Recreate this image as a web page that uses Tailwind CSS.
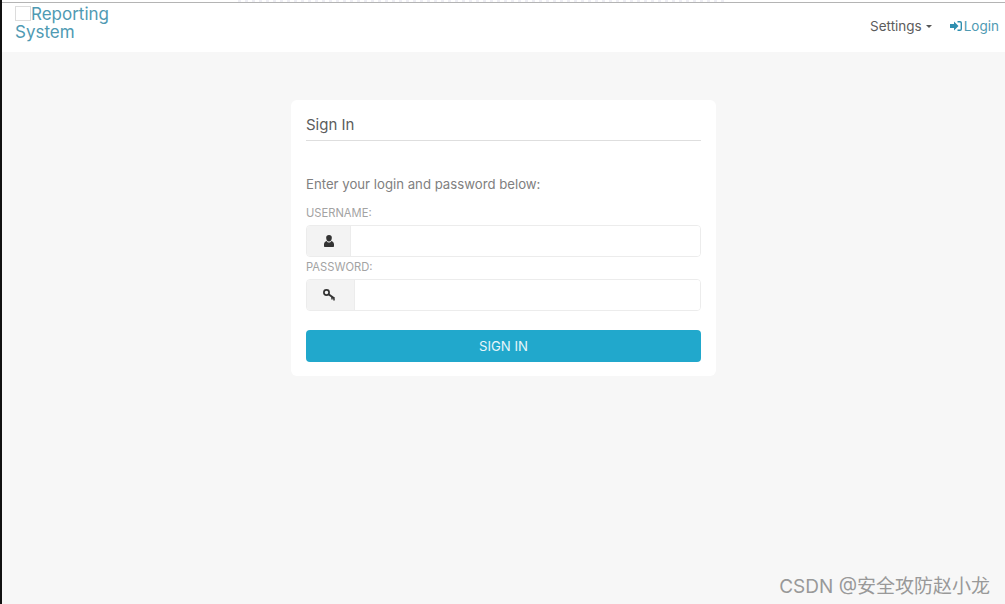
<!DOCTYPE html>
<html lang="en">
<head>
    <meta charset="UTF-8">
    <meta name="viewport" content="width=device-width, initial-scale=1.0">
    <title>Reporting System</title>
    <script src="https://cdn.jsdelivr.net/npm/@tailwindcss/browser@4"></script>
</head>
<body class="h-screen overflow-hidden bg-[#f7f7f7] font-['Inter','Noto_Sans_CJK_SC',sans-serif]">
    <div class="flex h-full">
        <!-- window edge -->
        <div class="w-[2px] shrink-0 bg-[#111]"></div>
        <div class="relative flex min-w-0 flex-1 flex-col">
            <!-- clipped content above the window -->
            <div class="h-[2px] bg-white pl-[236px] pr-[280px]">
                <div class="h-full bg-[repeating-linear-gradient(90deg,#eeeef4_0_3px,#fff_3px_7px)]"></div>
            </div>
            <div class="h-px bg-[#b4b4b4]"></div>

            <!-- Navbar -->
            <nav class="flex h-[49px] items-start justify-between bg-white pl-[13px] pr-[6px]">
                <a class="w-[110px] pt-[2px] text-[17px] leading-[18px] text-[#4f9ab3]">
                    <span class="inline-block h-[15px] w-[16px] border border-[#dcdcdc] align-[-1px]"></span>Reporting<br>System
                </a>
                <div class="flex items-center pt-[14px] text-[13.5px] leading-[18px]">
                    <span class="text-[#5c5c5c]">Settings</span>
                    <span class="ml-[4px] mt-[1px] h-0 w-0 border-x-[3px] border-t-[3px] border-x-transparent border-t-[#555]"></span>
                    <a class="ml-[18px] flex items-center text-[#4f9ab3]">
                        <svg class="mr-[2px] h-[12px] w-[12px]" viewBox="0 0 12 12" fill="#2f8fb0">
                            <path d="M0 4h4V1.500L8.500 6 4 10.500V8H0z"/>
                            <path d="M7.500 1H10a2 2 0 0 1 2 2v6a2 2 0 0 1-2 2H7.500V9.600H10a.6.6 0 0 0 .6-.6V3a.6.6 0 0 0-.6-.6H7.500z"/>
                        </svg>
                        Login
                    </a>
                </div>
            </nav>

            <!-- Login card -->
            <main class="flex flex-1 justify-center pt-[48px]">
                <div class="h-[276px] w-[425px] rounded-[6px] bg-white px-[15px] pt-[14px]">
                    <h1 class="h-[27px] border-b border-[#dedede] text-[15px] leading-[21px] text-[#5c5c5c]">Sign In</h1>
                    <p class="mt-[34px] text-[13.2px] leading-[18px] text-[#808080]">Enter your login and password below:</p>
                    <form>
                        <label class="mt-[13px] block text-[11.2px] leading-[14px] text-[#a3a3a3]">USERNAME:</label>
                        <div class="mt-[5px] flex h-[32px] overflow-hidden rounded-[4px] border border-[#ececec]">
                            <span class="flex w-[44px] items-center justify-center border-r border-[#ececec] bg-[#f3f3f3]">
                                <svg class="h-[12px] w-[10px]" viewBox="0 0 10 12" fill="#333">
                                    <path d="M5 0a2.800 2.800 0 0 1 2.800 3C7.800 4.800 6.800 6.500 5 6.500S2.200 4.800 2.200 3A2.800 2.800 0 0 1 5 0z"/>
                                    <path d="M2.700 6C1 6.500 0 7.500 0 9.500V11c0 .6.400 1 1 1h8c.6 0 1-.4 1-1V9.500C10 7.500 9 6.500 7.300 6 6.700 7 6 7.500 5 7.500S3.300 7 2.700 6z"/>
                                </svg>
                            </span>
                            <input type="text" class="min-w-0 flex-1 bg-white">
                        </div>
                        <label class="mt-[3px] block text-[11.2px] leading-[14px] text-[#a3a3a3]">PASSWORD:</label>
                        <div class="mt-[5px] flex h-[32px] overflow-hidden rounded-[4px] border border-[#ececec]">
                            <span class="flex w-[48px] items-center justify-center border-r border-[#ececec] bg-[#f3f3f3]">
                                <svg class="-ml-[3px] h-[12px] w-[13px]" viewBox="0 0 13 12" fill="none" stroke="#333">
                                    <circle cx="3.500" cy="3.500" r="2.600" stroke-width="1.700"/>
                                    <path d="M5.500 5.200 11.500 9.500" stroke-width="2"/>
                                    <path d="M9 8v2.500M11 9.500v2" stroke-width="1.500"/>
                                </svg>
                            </span>
                            <input type="password" class="min-w-0 flex-1 bg-white">
                        </div>
                        <button type="button" class="mt-[19px] h-[32px] w-full rounded-[4px] bg-[#21a8cc] pt-[1px] text-[13.2px] text-[#e8f6fa]">SIGN IN</button>
                    </form>
                </div>
            </main>

            <!-- Watermark -->
            <div class="absolute bottom-[5px] right-[15px] text-[19px] leading-[24px] text-[#999]">CSDN @安全攻防赵小龙</div>
        </div>
    </div>
</body>
</html>
